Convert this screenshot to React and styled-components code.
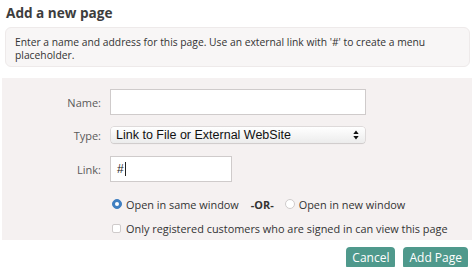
import React from "react";
import styled, { createGlobalStyle } from "styled-components";

const Global = createGlobalStyle`
  html, body { margin: 0; padding: 0; background: #ffffff; }
  body { font-family: "Open Sans", "Noto Sans", sans-serif; width: 474px; height: 267px; overflow: hidden; }
`;

const Page = styled.div`
  display: flex;
  flex-direction: column;
  width: 474px;
`;

const Title = styled.h1`
  margin: 0;
  padding: 3px 0 0 6px;
  height: 24px;
  font-size: 13.6px;
  line-height: 20px;
  font-weight: 700;
  color: #3d3d3d;
`;

const Info = styled.div`
  margin: 0 4px 0 5px;
  height: 40px;
  box-sizing: border-box;
  padding: 8px 9px;
  background: #f8f6f6;
  border: 1px solid #eeeaea;
  border-radius: 6px;
  font-size: 10.3px;
  line-height: 12.5px;
  color: #333;
`;

const Panel = styled.div`
  margin: 11px 2px 0 2px;
  height: 162px;
  box-sizing: border-box;
  background: #f5f1f1;
  padding-top: 11px;
  display: flex;
  flex-direction: column;
`;

const Row = styled.div`
  display: flex;
  align-items: center;
  margin-bottom: ${(p) => p.$mb || 0}px;
`;

const Label = styled.label`
  width: 99px;
  text-align: right;
  padding-right: 9px;
  font-size: 11px;
  color: #5a5a5a;
`;

const Input = styled.div`
  width: ${(p) => p.$w}px;
  height: 26px;
  box-sizing: border-box;
  background: #fff;
  border: 1px solid #cfcbcb;
  font-family: "Liberation Sans", Arial, sans-serif;
  font-size: 12px;
  color: #222;
  display: flex;
  align-items: center;
  padding-left: 6px;
`;

const Caret = styled.span`
  display: inline-block;
  width: 1px;
  height: 14px;
  background: #222;
  margin-left: 1px;
`;

const Select = styled.div`
  width: 254px;
  height: 16px;
  box-sizing: border-box;
  margin-left: 1px;
  border-radius: 3px;
  background: linear-gradient(#ffffff, #ececec);
  box-shadow: 0 0 0 0.5px #c8c4c4, 0 1px 1px rgba(0,0,0,0.12);
  display: flex;
  align-items: center;
  justify-content: space-between;
  padding: 0 6px 0 5px;
  font-family: "Liberation Sans", Arial, sans-serif;
  font-size: 12.5px;
  color: #111;
`;

const Options = styled.div`
  display: flex;
  align-items: center;
  padding-left: 110px;
  font-size: 10.9px;
  color: #333;
  height: 16px;
  margin-top: ${(p) => p.$mt}px;
`;

const Radio = styled.span`
  width: 10px;
  height: 10px;
  border-radius: 50%;
  box-sizing: border-box;
  margin-right: 4px;
  display: inline-flex;
  align-items: center;
  justify-content: center;
  background: ${(p) => (p.$on ? "#3f7fc1" : "#fff")};
  border: 1px solid ${(p) => (p.$on ? "#3f7fc1" : "#cfcbcb")};
  &::after {
    content: "";
    width: 4px;
    height: 4px;
    border-radius: 50%;
    background: ${(p) => (p.$on ? "#fff" : "transparent")};
  }
`;

const Check = styled.span`
  width: 9px;
  height: 9px;
  border-radius: 2px;
  box-sizing: border-box;
  margin-right: 5px;
  background: #fff;
  border: 1px solid #cfcbcb;
`;

const Or = styled.b`
  margin: 0 11px 0 12px;
  font-weight: 700;
  color: #333;
`;

const Footer = styled.div`
  display: flex;
  justify-content: flex-end;
  gap: 8px;
  padding: 7px 6px 0 0;
`;

const Button = styled.button`
  height: 22px;
  border: none;
  border-radius: 4px;
  background: #4f998c;
  color: #fff;
  font-family: "Open Sans", sans-serif;
  font-size: 12px;
  padding: 0 6px;
  line-height: 20px;
`;

export default function App() {
  return (
    <Page>
      <Global />
      <Title>Add a new page</Title>
      <Info>
        Enter a name and address for this page. Use an external link with '#' to create a menu placeholder.
      </Info>
      <Panel>
        <Row $mb={12}>
          <Label>Name:</Label>
          <Input $w={256} />
        </Row>
        <Row $mb={13}>
          <Label>Type:</Label>
          <Select>
            <span>Link to File or External WebSite</span>
            <svg width="6" height="10" viewBox="0 0 6 10">
              <path d="M3 0.5 L5.7 4 H0.3 Z M3 9.5 L5.7 6 H0.3 Z" fill="#111" />
            </svg>
          </Select>
        </Row>
        <Row>
          <Label>Link:</Label>
          <Input $w={122}>#<Caret /></Input>
        </Row>
        <Options $mt={14}>
          <Radio $on />
          <span>Open in same window</span>
          <Or>-OR-</Or>
          <Radio />
          <span>Open in new window</span>
        </Options>
        <Options $mt={8}>
          <Check />
          <span>Only registered customers who are signed in can view this page</span>
        </Options>
      </Panel>
      <Footer>
        <Button>Cancel</Button>
        <Button>Add Page</Button>
      </Footer>
    </Page>
  );
}
